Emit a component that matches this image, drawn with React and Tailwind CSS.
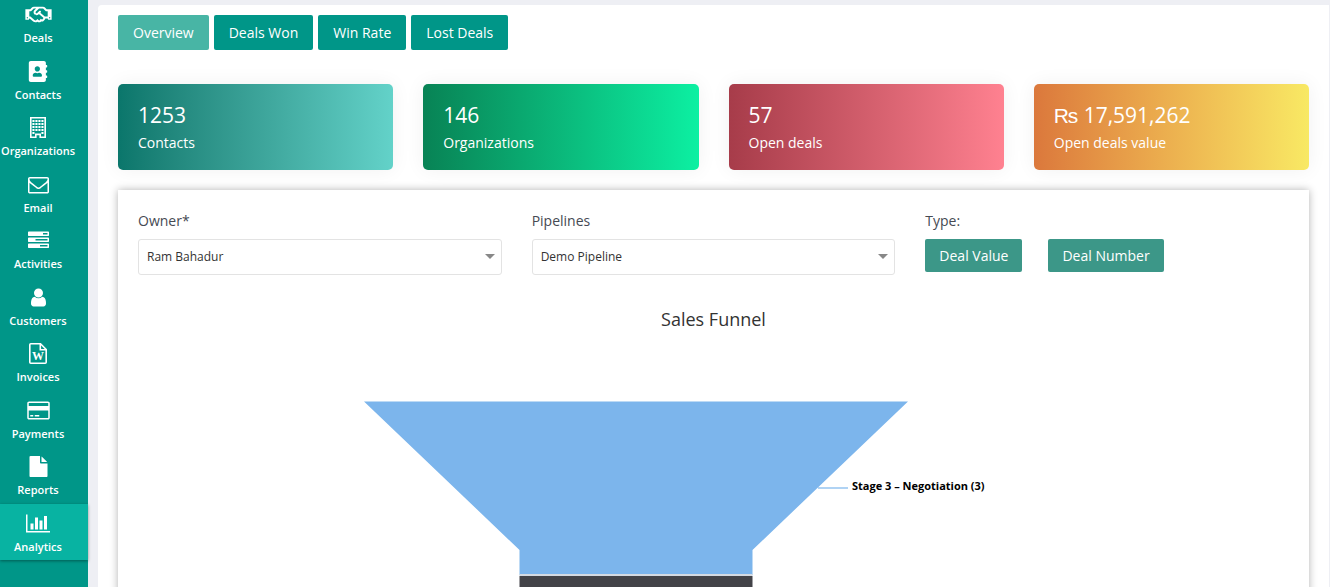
import React, { useState } from "react";
import { FaAddressBook, FaRegHandshake } from "react-icons/fa";

const Glyph = ({ viewBox, d, className }) => (
  <svg viewBox={viewBox} fill="currentColor" aria-hidden="true" className={className}>
    <path d={d} />
  </svg>
);

const BuildingIcon = ({ className }) => (
  <svg viewBox="0 0 16 21" fill="none" aria-hidden="true" className={className}>
    <path d="M0.8 0.8H15.2V20.2H10.2V17.4H5.8V20.2H0.8Z" stroke="currentColor" strokeWidth="1.6" />
    {[3, 6, 9, 12].map((y) =>
      [3, 6, 9, 12].map((x) => (
        <rect key={`${x}-${y}`} x={x - 0.6} y={y} width="2.1" height="2" fill="currentColor" />
      ))
    )}
    <rect x="2.4" y="15" width="2.1" height="2" fill="currentColor" />
    <rect x="11.4" y="15" width="2.1" height="2" fill="currentColor" />
  </svg>
);

const InvoiceIcon = ({ className }) => (
  <svg viewBox="0 0 18 21" fill="none" aria-hidden="true" className={className}>
    <path
      d="M1.8 0.8H11.5L17.2 6.5V19.2Q17.2 20.2 16.2 20.2H1.8Q0.8 20.2 0.8 19.2V1.8Q0.8 0.8 1.8 0.8ZM11.3 1V6.7H17"
      stroke="currentColor"
      strokeWidth="1.6"
    />
    <text
      x="9"
      y="17"
      textAnchor="middle"
      fontSize="12"
      fontWeight="700"
      fill="currentColor"
      className="font-['Liberation_Serif',serif]">
      W
    </text>
  </svg>
);

const menuItems = [
  { name: "Deals", icon: <FaRegHandshake className="w-[27px] h-[21px]" /> },
  { name: "Contacts", icon: <FaAddressBook className="w-5 h-[21px]" /> },
  { name: "Organizations", icon: <BuildingIcon className="w-4 h-[21px]" /> },
  {
    name: "Email",
    icon: (
      <Glyph
        className="w-[21px] h-[21px]"
        viewBox="0 0 1792 1792"
        d="M1664 1504v-768q-32 36-69 66-268 206-426 338-51 43-83 67t-86.5 48.5-102.5 24.5h-2q-48 0-102.5-24.5t-86.5-48.5-83-67q-158-132-426-338-37-30-69-66v768q0 13 9.5 22.5t22.5 9.5h1472q13 0 22.5-9.5t9.5-22.5zm0-1051v-24.5l-.5-13-3-12.5-5.5-9-9-7.5-14-2.5h-1472q-13 0-22.5 9.5t-9.5 22.5q0 168 147 284 193 152 401 317 6 5 35 29.5t46 37.5 44.5 31.5 50.5 27.5 43 9h2q20 0 43-9t50.5-27.5 44.5-31.5 46-37.5 35-29.5q208-165 401-317 54-43 100.5-115.5t46.5-131.5zm128-37v1088q0 66-47 113t-113 47h-1472q-66 0-113-47t-47-113v-1088q0-66 47-113t113-47h1472q66 0 113 47t47 113z"
      />
    ),
  },
  {
    name: "Activities",
    icon: (
      <Glyph
        className="w-[21px] h-[21px]"
        viewBox="0 0 1792 1792"
        d="M1024 1408h640v-128h-640v128zm-384-512h1024v-128h-1024v128zm640-512h384v-128h-384v128zm512 832v256q0 26-19 45t-45 19h-1664q-26 0-45-19t-19-45v-256q0-26 19-45t45-19h1664q26 0 45 19t19 45zm0-512v256q0 26-19 45t-45 19h-1664q-26 0-45-19t-19-45v-256q0-26 19-45t45-19h1664q26 0 45 19t19 45zm0-512v256q0 26-19 45t-45 19h-1664q-26 0-45-19t-19-45v-256q0-26 19-45t45-19h1664q26 0 45 19t19 45z"
      />
    ),
  },
  {
    name: "Customers",
    icon: (
      <Glyph
        className="w-[21px] h-[21px]"
        viewBox="0 0 1792 1792"
        d="M1536 1399q0 109-62.5 187t-150.5 78h-854q-88 0-150.5-78t-62.5-187q0-85 8.5-160.5t31.5-152 58.5-131 94-89 134.5-34.5q131 128 313 128t313-128q76 0 134.5 34.5t94 89 58.5 131 31.5 152 8.5 160.5zm-256-887q0 159-112.5 271.5t-271.5 112.5-271.5-112.5-112.5-271.5 112.5-271.5 271.5-112.5 271.5 112.5 112.5 271.5z"
      />
    ),
  },
  { name: "Invoices", icon: <InvoiceIcon className="w-[18px] h-[21px]" /> },
  {
    name: "Payments",
    icon: (
      <Glyph
        className="w-[23px] h-[21px]"
        viewBox="0 0 1920 1792"
        d="M1760 128q66 0 113 47t47 113v1216q0 66-47 113t-113 47h-1600q-66 0-113-47t-47-113v-1216q0-66 47-113t113-47h1600zm-1600 128q-13 0-22.5 9.5t-9.5 22.5v224h1664v-224q0-13-9.5-22.5t-22.5-9.5h-1600zm1600 1280q13 0 22.5-9.5t9.5-22.5v-608h-1664v608q0 13 9.5 22.5t22.5 9.5h1600zm-1504-128v-128h256v128h-256zm384 0v-128h384v128h-384z"
      />
    ),
  },
  {
    name: "Reports",
    icon: (
      <Glyph
        className="w-[21px] h-[21px]"
        viewBox="0 0 1792 1792"
        d="M1152 512v-472q22 14 36 28l408 408q14 14 28 36h-472zm-128 32q0 40 28 68t68 28h544v1056q0 40-28 68t-68 28h-1344q-40 0-68-28t-28-68v-1600q0-40 28-68t68-28h800v544z"
      />
    ),
  },
  {
    name: "Analytics",
    icon: (
      <Glyph
        className="w-6 h-[21px]"
        viewBox="0 0 2048 1792"
        d="M640 896v512h-256v-512h256zm384-512v1024h-256v-1024h256zm1024 1152v128h-2048v-1536h128v1408h1920zm-640-896v768h-256v-768h256zm384-384v1152h-256v-1152h256z"
      />
    ),
  },
];

const tabs = ["Overview", "Deals Won", "Win Rate", "Lost Deals"];

const stats = [
  { value: "1253", label: "Contacts", color: "from-[#0a766b] to-[#63d2c9]" },
  { value: "146", label: "Organizations", color: "from-[#088355] to-[#0cf0a2]" },
  { value: "57", label: "Open deals", color: "from-[#a73c4a] to-[#ff8190]" },
  { value: "₨ 17,591,262", label: "Open deals value", color: "from-[#db783c] to-[#f8e964]" },
];

const Sidebar = () => (
  <nav className="w-[88px] shrink-0 bg-[#009688] text-white">
    <ul className="grid grid-rows-10 h-[565px] -mt-[5px]">
      {menuItems.map((item) => (
        <li
          key={item.name}
          className={
            item.name === "Analytics" ? "bg-[#08b3a2] shadow-[0_1px_3px_rgba(0,0,0,0.4)]" : ""
          }>
          <a href="#" className="flex flex-col items-center w-[76px] pt-[9px]">
            {item.icon}
            <span className="mt-[5px] text-[11px] leading-4 font-semibold">{item.name}</span>
          </a>
        </li>
      ))}
    </ul>
  </nav>
);

const SelectField = ({ id, label, option }) => (
  <div>
    <label htmlFor={id} className="block text-sm leading-5 text-[#464a53]">
      {label}
    </label>
    <div className="relative mt-2">
      <select
        id={id}
        className="appearance-none block w-full h-9 pl-2 pr-8 text-xs text-[#333] bg-white border border-[#e3e3e3] rounded-[3px]">
        <option>{option}</option>
      </select>
      <span className="absolute right-[7px] top-[15px] border-x-5 border-t-5 border-x-transparent border-t-[#888] pointer-events-none" />
    </div>
  </div>
);

const SalesFunnel = () => (
  <section className="mt-8">
    <h2 className="text-center text-lg leading-6 text-[#333]">Sales Funnel</h2>
    <svg viewBox="0 0 1151 400" className="block w-full mt-4" role="img" aria-label="Sales Funnel">
      <path d="M226 54.5H770L614.5 203V228H381.5V203Z" fill="#7cb5ec" />
      <path d="M381.5 229H614.5V400H381.5Z" fill="#434348" />
      <path d="M381.5 228H614.5" stroke="#d4dae2" strokeWidth="2" />
      <path d="M680 141H710" stroke="#7cb5ec" strokeOpacity="0.6" strokeWidth="2" />
      <text x="714" y="143" fontSize="11" fontWeight="700" fill="#000">
        Stage 3 – Negotiation (3)
      </text>
    </svg>
  </section>
);

const App = () => {
  const [activeTab, setActiveTab] = useState("Overview");

  return (
    <div className="flex h-screen overflow-hidden bg-[#eeeff4] font-['Open_Sans','Liberation_Sans',sans-serif]">
      <Sidebar />

      <main className="flex-1 min-w-0 mt-[5px] ml-[10px] px-5 pt-[10px] bg-white rounded-tl-[4px] border-r border-[#eeeff4]">
        {/* Tabs */}
        <div className="flex gap-[5px]">
          {tabs.map((tab) => (
            <button
              key={tab}
              onClick={() => setActiveTab(tab)}
              className={`h-[35px] px-[15px] rounded-[2px] text-sm text-white ${
                activeTab === tab ? "bg-[#48b5a5]" : "bg-[#009688]"
              }`}>
              {tab}
            </button>
          ))}
        </div>

        {/* Stat cards */}
        <div className="grid grid-cols-4 gap-[30px] mt-[34px]">
          {stats.map((stat) => (
            <div
              key={stat.label}
              className={`h-[86px] px-5 pt-[15px] rounded-[5px] text-white bg-linear-to-r shadow-[0_0_20px_rgba(1,41,36,0.06)] ${stat.color}`}>
              <p className="text-[21px] leading-8">{stat.value}</p>
              <p className="text-sm leading-6">{stat.label}</p>
            </div>
          ))}
        </div>

        {/* Funnel panel */}
        <div className="mt-5 px-5 pt-[21px] pb-5 bg-white shadow-[0_0_8px_rgba(0,0,0,0.3)]">
          <div className="grid grid-cols-3 gap-[30px]">
            <SelectField id="owner" label="Owner*" option="Ram Bahadur" />
            <SelectField id="pipeline" label="Pipelines" option="Demo Pipeline" />
            <div>
              <p className="text-sm leading-5 text-[#464a53]">Type:</p>
              <div className="flex gap-[26px] mt-2">
                <button className="h-[33px] px-[14px] rounded-[2px] text-sm text-white bg-[#3c9788]">
                  Deal Value
                </button>
                <button className="h-[33px] px-[14px] rounded-[2px] text-sm text-white bg-[#3c9788]">
                  Deal Number
                </button>
              </div>
            </div>
          </div>

          <SalesFunnel />
        </div>
      </main>
    </div>
  );
};

export default App;
